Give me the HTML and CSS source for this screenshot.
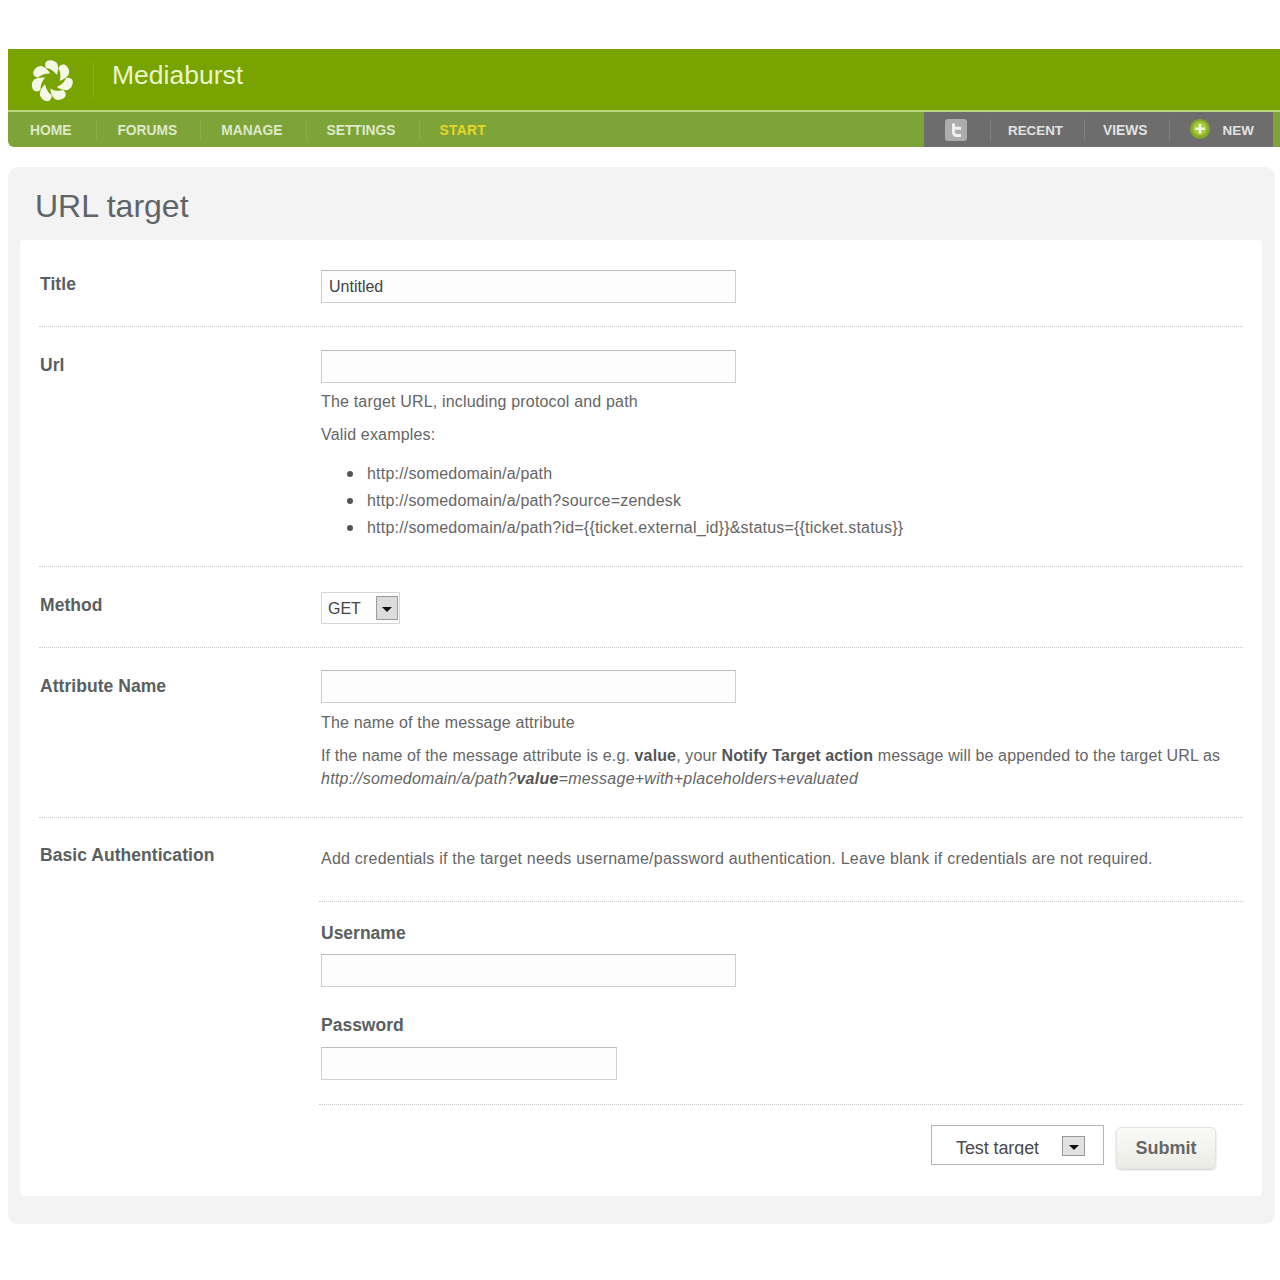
FILE: index.html
```html
<!DOCTYPE html>
<html lang="en">
<head>
<meta charset="utf-8">
<title>URL target</title>
<link rel="stylesheet" href="styles.css">
</head>
<body>
<header class="header">
  <div class="brand">
    <svg class="logo" viewBox="0 0 44 44" width="44" height="44" aria-hidden="true">
      <defs>
        <path id="petal" d="M17 2 C20.5 0.4 25.4 1.4 27.4 5 C28.6 8 28.2 12.6 26.8 16 C24.6 12.6 20.6 9.6 16 9 C14.6 6.6 14.8 3.4 17 2Z"/>
      </defs>
      <g fill="#f4f9e6">
        <use href="#petal"/>
        <use href="#petal" transform="rotate(51.4 22 22)"/>
        <use href="#petal" transform="rotate(102.9 22 22)"/>
        <use href="#petal" transform="rotate(154.3 22 22)"/>
        <use href="#petal" transform="rotate(205.7 22 22)"/>
        <use href="#petal" transform="rotate(257.1 22 22)"/>
        <use href="#petal" transform="rotate(308.6 22 22)"/>
      </g>
    </svg>
    <span class="brand-sep"></span>
    <span class="brand-name">Mediaburst</span>
  </div>
  <nav class="nav">
    <ul class="nav-left">
      <li class="nav-item first">HOME</li>
      <li class="nav-item">FORUMS</li>
      <li class="nav-item">MANAGE</li>
      <li class="nav-item">SETTINGS</li>
      <li class="nav-item start">START</li>
    </ul>
    <ul class="nav-right">
      <li class="tw-cell">
        <svg class="tw" viewBox="0 0 22 22" width="22" height="22" aria-hidden="true">
          <rect width="22" height="22" rx="3" fill="#adadad"/>
          <path d="M8.5 4.5v8.5q0 3.5 3.5 3.5h4M8.5 9.2h7.5" fill="none" stroke="#f0f0f0" stroke-width="3"/>
        </svg>
      </li>
      <li class="right-item recent">RECENT</li>
      <li class="right-item views">VIEWS</li>
      <li class="right-item new">
        <svg class="plus" viewBox="0 0 20 20" width="20" height="20" aria-hidden="true">
          <circle cx="10" cy="10" r="10" fill="#86ab28"/>
          <circle cx="10" cy="9.5" r="7" fill="#a6c83f"/>
          <path d="M10 5v9.5M5.2 9.8h9.6" stroke="#f2f8dc" stroke-width="2.6"/>
        </svg>
        <span class="new-label">NEW</span>
      </li>
    </ul>
  </nav>
</header>

<main class="panel">
  <h1 class="page-title">URL target</h1>
  <div class="card">
    <section class="row row-title">
      <label class="label">Title</label>
      <div class="field"><div class="input">Untitled</div></div>
    </section>
    <section class="row row-url">
      <label class="label">Url</label>
      <div class="field">
        <div class="input"></div>
        <p class="hint hint-first">The target URL, including protocol and path</p>
        <p class="hint hint-next">Valid examples:</p>
        <ul class="examples">
          <li>http://somedomain/a/path</li>
          <li>http://somedomain/a/path?source=zendesk</li>
          <li>http://somedomain/a/path?id={{ticket.external_id}}&amp;status={{ticket.status}}</li>
        </ul>
      </div>
    </section>
    <section class="row row-method">
      <label class="label">Method</label>
      <div class="field">
        <div class="select"><span class="select-value">GET</span><span class="arrow-box"><span class="arrow"></span></span></div>
      </div>
    </section>
    <section class="row row-attr">
      <label class="label">Attribute Name</label>
      <div class="field">
        <div class="input"></div>
        <p class="hint hint-first">The name of the message attribute</p>
        <p class="hint hint-next attr-note">If the name of the message attribute is e.g. <b>value</b>, your <b>Notify Target action</b> message will be appended to the target URL as<br><i>http://somedomain/a/path?<b>value</b>=message+with+placeholders+evaluated</i></p>
      </div>
    </section>
    <section class="row row-auth">
      <label class="label">Basic Authentication</label>
      <div class="field">
        <p class="hint auth-hint">Add credentials if the target needs username/password authentication. Leave blank if credentials are not required.</p>
        <div class="auth-fields">
          <div class="sub-label">Username</div>
          <div class="input"></div>
          <div class="sub-label second">Password</div>
          <div class="input short"></div>
        </div>
        <div class="actions">
          <div class="test"><span class="test-label">Test target</span><span class="arrow-box small"><span class="arrow"></span></span></div>
          <button class="submit" type="button">Submit</button>
        </div>
      </div>
    </section>
  </div>
</main>
</body>
</html>
```
FILE: styles.css
```css
* { box-sizing: border-box; }
html, body { margin: 0; padding: 0; background: #fff; }
body { font-family: "Liberation Sans", Arial, sans-serif; color: #555; padding: 49px 5px 56px 8px; font-size: 16px; }
ul { list-style: none; margin: 0; padding: 0; }
p { margin: 0; }

.header { margin-right: -5px; border-radius: 0 0 0 6px; overflow: hidden; }
.brand { height: 61px; background: #78a300; display: flex; align-items: center; padding-left: 22px; }
.logo { width: 44px; height: 44px; margin-top: 2px; }
.brand-sep { width: 1px; height: 36px; background: #88b018; margin-left: 19px; margin-right: 18px; }
.brand-name { color: #eaf6cc; font-size: 26.5px; line-height: 30px; margin-top: -9px; }

.nav { height: 37px; border-top: 2px solid #bcd67c; background: #7ea339; display: flex; justify-content: space-between; font-size: 13.8px; font-weight: bold; }
.nav-left { display: flex; align-items: center; color: #dfe9c8; padding-top: 2px; }
.nav-item { padding: 0 23px 0 20px; border-left: 1px solid #8aae48; line-height: 20px; }
.nav-item.first { border-left: 0; padding-left: 22px; padding-right: 25px; }
.start { color: #e6d62a; letter-spacing: 0.3px; }

.nav-right { display: flex; align-items: center; width: 349px; background: #6d6d6d; color: #e2e2e2; margin-right: 7px; font-size: 13.4px; }
.tw-cell { padding-left: 21px; padding-right: 23px; display: flex; }
.right-item { border-left: 1px solid #808080; line-height: 20px; }
.recent { padding: 2px 21px 0 17px; }
.views { padding: 2px 21px 0 18px; font-size: 13.8px; }
.new { display: flex; align-items: center; gap: 13px; padding-left: 20px; }
.new-label { margin-top: 2px; }
.plus { margin-top: -2px; }

.panel { margin-top: 20px; background: #f3f3f3; border-radius: 10px; padding: 0 13px 28px 12px; }
.page-title { margin: 0; font-weight: normal; font-size: 32px; line-height: 38px; color: #5f6468; padding: 20px 0 15px 15px; height: 73px; }
.card { background: #fff; border-radius: 4px; padding: 0 19px 27px; }

.row { display: flex; border-bottom: 1px dotted #c9c9c9; }
.row-auth { border-bottom: 0; }
.label { width: 282px; flex: none; font-weight: bold; color: #5a5f5f; font-size: 17.5px; line-height: 22px; padding-left: 1px; letter-spacing: 0.05px; }
.field { flex: 1; min-width: 0; }
.input { width: 415px; height: 33px; border: 1px solid #d0d0d0; border-top-color: #bcbcbc; background: #fdfdfd; color: #444; padding-left: 7px; line-height: 31px; font-size: 16px; }
.input.short { width: 296px; }

.row-title { height: 87px; padding-top: 30px; }
.row-title .label { padding-top: 3px; }
.row-url { height: 240px; padding-top: 23px; }
.row-url .label { padding-top: 4px; }
.row-method { height: 81px; padding-top: 25px; }
.row-method .label { padding-top: 2px; }
.row-attr { height: 170px; padding-top: 22px; }
.row-attr .label { padding-top: 5px; }
.row-auth { padding-top: 26px; }
.row-auth .label { padding-top: 0; }

.hint { font-size: 16px; line-height: 23px; color: #666; letter-spacing: 0.17px; }
.hint-first { margin-top: 7px; }
.hint-next { margin-top: 10px; }
.row-attr .hint-first { margin-top: 8px; }
.hint b { color: #555; }
.hint i { color: #666; letter-spacing: 0.24px; }
.attr-note { letter-spacing: 0.13px; }
.examples { margin-top: 14px; padding-left: 46px; color: #666; font-size: 16px; line-height: 27px; letter-spacing: 0.2px; }
.examples li { position: relative; }
.examples li::before { content: ""; position: absolute; left: -20px; top: 11px; width: 6px; height: 6px; border-radius: 50%; background: #555; }

.select { width: 79px; height: 32px; border: 1px solid #d6d6d6; background: #fdfdfd; display: flex; align-items: center; justify-content: space-between; padding: 0 1px 0 6px; font-size: 16px; color: #444; }
.select-value { margin-top: 2px; }
.arrow-box { width: 22px; height: 24px; border: 1px solid #999; background: #dcdcdc; display: flex; align-items: center; justify-content: center; }
.arrow { width: 0; height: 0; border-left: 5px solid transparent; border-right: 5px solid transparent; border-top: 5px solid #111; margin-top: 2px; }

.auth-hint { height: 54px; margin-top: 3px; letter-spacing: 0.22px; }
.auth-fields { border-top: 1px dotted #c9c9c9; padding-top: 19px; padding-bottom: 24px; border-bottom: 1px dotted #c9c9c9; margin-left: -2px; padding-left: 2px; }
.sub-label { font-weight: bold; font-size: 17.5px; line-height: 24px; color: #5a5f5f; margin-bottom: 9px; }
.sub-label.second { margin-top: 26px; margin-bottom: 10px; }

.actions { display: flex; justify-content: flex-end; align-items: flex-start; gap: 12px; padding: 20px 27px 0 0; }
.test { width: 173px; height: 40px; border: 1px solid #b5b5b5; background: #fff; display: flex; align-items: flex-start; justify-content: space-between; padding: 8px 18px 0 24px; font-size: 18px; color: #4a4a4a; line-height: 28px; }
.test-label { display: block; height: 21px; overflow: hidden; letter-spacing: -0.1px; }
.arrow-box.small { width: 23px; height: 20px; margin-top: 2px; background: #e2e2e2; }
.submit { width: 100px; height: 42px; margin-top: 2px; border: 1px solid #e4e4de; border-radius: 5px; background: linear-gradient(#fafaf8, #ecece6); font: bold 18px "Liberation Sans", Arial, sans-serif; color: #666; padding: 0; box-shadow: 0 1px 2px #ccc; }
```
